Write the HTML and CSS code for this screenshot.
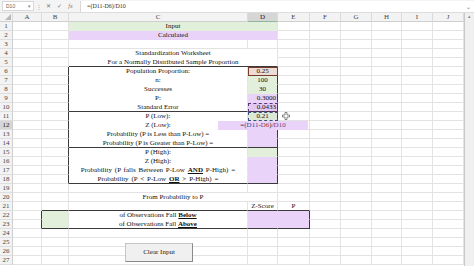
FILE: index.html
```html
<!DOCTYPE html>
<html>
<head>
<meta charset="utf-8">
<link rel="stylesheet" href="styles.css">
</head>
<body>
<div class="app">
  <div class="fbar">
    <div class="namebox"><span>D10</span><span class="dd">▾</span></div>
    <div class="dots">⋮</div>
    <div class="fbtn">✕</div>
    <div class="fbtn">✓</div>
    <div class="fbtn fx">fx</div>
    <div class="finput"><span>=(D11-D6)/D10</span><span class="fexp">⌄</span></div>
  </div>
  <div class="main">
    <div class="sheet">
      <div class="hd corner"><svg width="6" height="6" viewBox="0 0 6 6"><polygon points="6,0 6,6 0,6" fill="#b8b8b8"/></svg></div>
      <div class="hd">A</div><div class="hd">B</div><div class="hd">C</div><div class="hd sel">D</div><div class="hd">E</div><div class="hd">F</div><div class="hd">G</div><div class="hd">H</div><div class="hd">I</div><div class="hd">J</div>

      <div class="rh">1</div><div class="c"></div><div class="c"></div><div class="c s2 g ctr">Input</div><div class="c"></div><div class="c"></div><div class="c"></div><div class="c"></div><div class="c"></div><div class="c"></div>
      <div class="rh">2</div><div class="c"></div><div class="c"></div><div class="c s2 p ctr">Calculated</div><div class="c"></div><div class="c"></div><div class="c"></div><div class="c"></div><div class="c"></div><div class="c"></div>
      <div class="rh">3</div><div class="c"></div><div class="c"></div><div class="c"></div><div class="c"></div><div class="c"></div><div class="c"></div><div class="c"></div><div class="c"></div><div class="c"></div><div class="c"></div>
      <div class="rh">4</div><div class="c"></div><div class="c"></div><div class="c s2 ctr nb">Standardization Worksheet</div><div class="c"></div><div class="c"></div><div class="c"></div><div class="c"></div><div class="c"></div><div class="c"></div>
      <div class="rh">5</div><div class="c"></div><div class="c"></div><div class="c s2 ctr db">For a Normally Distributed Sample Proportion</div><div class="c"></div><div class="c"></div><div class="c"></div><div class="c"></div><div class="c"></div><div class="c"></div>

      <div class="rh">6</div><div class="c"></div><div class="c dr"></div><div class="c ctr nb">Population Proportion:</div><div class="c ctr tan dr ref-red">0.25</div><div class="c"></div><div class="c"></div><div class="c"></div><div class="c"></div><div class="c"></div><div class="c"></div>
      <div class="rh">7</div><div class="c"></div><div class="c dr"></div><div class="c ctr nb">n:</div><div class="c ctr g dr">100</div><div class="c"></div><div class="c"></div><div class="c"></div><div class="c"></div><div class="c"></div><div class="c"></div>
      <div class="rh">8</div><div class="c"></div><div class="c dr"></div><div class="c ctr nb">Successes</div><div class="c ctr g dr">30</div><div class="c"></div><div class="c"></div><div class="c"></div><div class="c"></div><div class="c"></div><div class="c"></div>
      <div class="rh">9</div><div class="c"></div><div class="c dr"></div><div class="c ctr nb">P:</div><div class="c rt p dr">0.3000</div><div class="c"></div><div class="c"></div><div class="c"></div><div class="c"></div><div class="c"></div><div class="c"></div>
      <div class="rh">10</div><div class="c"></div><div class="c dr"></div><div class="c ctr db">Standard Error</div><div class="c rt pp dr db ref-purple">0.0433</div><div class="c"></div><div class="c"></div><div class="c"></div><div class="c"></div><div class="c"></div><div class="c"></div>

      <div class="rh">11</div><div class="c"></div><div class="c dr"></div><div class="c ctr nb">P (Low):</div><div class="c ctr gb dr ref-blue">0.21</div><div class="c"></div><div class="c"></div><div class="c"></div><div class="c"></div><div class="c"></div><div class="c"></div>
      <div class="rh sel">12</div><div class="c"></div><div class="c dr"></div><div class="c ctr nb">Z (Low):</div><div class="c p dr"></div><div class="c"></div><div class="c"></div><div class="c"></div><div class="c"></div><div class="c"></div><div class="c"></div>
      <div class="rh">13</div><div class="c"></div><div class="c dr"></div><div class="c ctr nb">Probability (P is Less than P-Low) =</div><div class="c p dr"></div><div class="c"></div><div class="c"></div><div class="c"></div><div class="c"></div><div class="c"></div><div class="c"></div>
      <div class="rh">14</div><div class="c"></div><div class="c dr"></div><div class="c ctr db">Probability (P is Greater than P-Low) =</div><div class="c p dr db"></div><div class="c"></div><div class="c"></div><div class="c"></div><div class="c"></div><div class="c"></div><div class="c"></div>

      <div class="rh">15</div><div class="c"></div><div class="c dr"></div><div class="c ctr nb">P (High):</div><div class="c g dr"></div><div class="c"></div><div class="c"></div><div class="c"></div><div class="c"></div><div class="c"></div><div class="c"></div>
      <div class="rh">16</div><div class="c"></div><div class="c dr"></div><div class="c ctr nb">Z (High):</div><div class="c p dr"></div><div class="c"></div><div class="c"></div><div class="c"></div><div class="c"></div><div class="c"></div><div class="c"></div>
      <div class="rh">17</div><div class="c"></div><div class="c dr"></div><div class="c ctr nb wide">Probability (P falls Between P-Low <b><u>AND</u></b> P-High) =</div><div class="c p dr"></div><div class="c"></div><div class="c"></div><div class="c"></div><div class="c"></div><div class="c"></div><div class="c"></div>
      <div class="rh">18</div><div class="c"></div><div class="c dr"></div><div class="c ctr db wide">Probability (P &lt; P-Low <b><u>OR</u></b> &gt; P-High) =</div><div class="c p dr db"></div><div class="c"></div><div class="c"></div><div class="c"></div><div class="c"></div><div class="c"></div><div class="c"></div>

      <div class="rh">19</div><div class="c"></div><div class="c"></div><div class="c"></div><div class="c"></div><div class="c"></div><div class="c"></div><div class="c"></div><div class="c"></div><div class="c"></div><div class="c"></div>
      <div class="rh">20</div><div class="c"></div><div class="c"></div><div class="c s2 ctr">From Probability to P</div><div class="c"></div><div class="c"></div><div class="c"></div><div class="c"></div><div class="c"></div><div class="c"></div>
      <div class="rh">21</div><div class="c"></div><div class="c db"></div><div class="c db"></div><div class="c ctr db">Z-Score</div><div class="c ctr db">P</div><div class="c"></div><div class="c"></div><div class="c"></div><div class="c"></div><div class="c"></div>
      <div class="rh">22</div><div class="c dr"></div><div class="c g"></div><div class="c ctr nb">of Observations Fall <b><u>Below</u></b></div><div class="c p pn"></div><div class="c p dr"></div><div class="c"></div><div class="c"></div><div class="c"></div><div class="c"></div><div class="c"></div>
      <div class="rh">23</div><div class="c dr"></div><div class="c g db"></div><div class="c ctr db">of Observations Fall <b><u>Above</u></b></div><div class="c p pn db"></div><div class="c p dr db"></div><div class="c"></div><div class="c"></div><div class="c"></div><div class="c"></div><div class="c"></div>
      <div class="rh">24</div><div class="c"></div><div class="c"></div><div class="c"></div><div class="c"></div><div class="c"></div><div class="c"></div><div class="c"></div><div class="c"></div><div class="c"></div><div class="c"></div>
      <div class="rh">25</div><div class="c"></div><div class="c"></div><div class="c"></div><div class="c"></div><div class="c"></div><div class="c"></div><div class="c"></div><div class="c"></div><div class="c"></div><div class="c"></div>
      <div class="rh">26</div><div class="c"></div><div class="c"></div><div class="c"></div><div class="c"></div><div class="c"></div><div class="c"></div><div class="c"></div><div class="c"></div><div class="c"></div><div class="c"></div>
      <div class="rh">27</div><div class="c"></div><div class="c"></div><div class="c"></div><div class="c"></div><div class="c"></div><div class="c"></div><div class="c"></div><div class="c"></div><div class="c"></div><div class="c"></div>
    </div>
    <div class="vscroll"><span class="up">▴</span></div>

    <div class="editor">=<span class="r-blue">(D11</span>-<span class="r-red">D6</span>)/<span class="r-purple">D10</span></div>
    <svg class="cursor" width="8" height="8" viewBox="0 0 8 8"><path d="M3 0.5h2v2.5h2.5v2h-2.5v2.5h-2v-2.5h-2.5v-2h2.5z" fill="#fff" stroke="#555" stroke-width="0.7"/></svg>
    <div class="btn">Clear Input</div>
  </div>
</div>
</body>
</html>
```

FILE: styles.css
```css
* { box-sizing: border-box; }
html, body { margin: 0; padding: 0; }
body {
  width: 474px;
  height: 266px;
  overflow: hidden;
  background: #fff;
  font-family: "Liberation Serif", "Times New Roman", serif;
  color: #222;
}
.app { display: flex; flex-direction: column; width: 474px; height: 266px; }

.fbar {
  height: 13px;
  display: flex;
  align-items: center;
  background: #f4f4f4;
  border-bottom: 1px solid #dcdcdc;
  font-family: "Liberation Sans", Arial, sans-serif;
  font-size: 5px;
  color: #666;
}
.namebox {
  width: 32px;
  height: 10px;
  margin-left: 2px;
  background: #fff;
  border: 1px solid #d8d8d8;
  display: flex;
  align-items: center;
  justify-content: space-between;
  padding: 0 2px 0 3px;
}
.dd { font-size: 5px; color: #888; }
.dots { width: 9px; text-align: center; color: #aaa; font-size: 6px; }
.fbtn { width: 11px; text-align: center; color: #777; font-size: 5.5px; }
.fx { font-style: italic; font-family: "Liberation Serif", serif; font-size: 6px; }
.finput {
  flex: 1;
  height: 11px;
  margin-left: 4px;
  background: #fff;
  border-left: 1px solid #d8d8d8;
  display: flex;
  align-items: center;
  justify-content: space-between;
  padding: 0 3px 0 6px;
  color: #333;
  font-family: "Liberation Serif", serif;
  font-size: 6px;
}
.fexp { color: #777; font-size: 6px; }

.main { position: relative; display: flex; flex: 1; }
.sheet {
  display: grid;
  grid-template-columns: 13px 29px 27px 179px 30px 32px 31px 31px 30px 31px 31px;
  grid-template-rows: 9px repeat(27, 9px);
  width: 464px;
}
.hd {
  background: #f3f3f3;
  border-right: 1px solid #dadada;
  border-bottom: 1px solid #cfcfcf;
  font-size: 7px;
  line-height: 8px;
  text-align: center;
  color: #444;
}
.hd.sel { background: #d6d6d6; border-bottom: 1px solid #8fb89a; color: #222; }
.corner { display: flex; align-items: flex-end; justify-content: flex-end; padding: 0 1px 1px 0; }
.rh {
  background: #f3f3f3;
  border-right: 1px solid #cfcfcf;
  border-bottom: 1px solid #dedede;
  font-size: 7px;
  line-height: 8px;
  text-align: center;
  color: #444;
}
.rh.sel { background: #d6d6d6; color: #222; }

.c {
  border-right: 1px solid #e3e3e3;
  border-bottom: 1px solid #e3e3e3;
  font-size: 7px;
  line-height: 8px;
  white-space: nowrap;
  padding: 0 1px;
  color: #111;
}
.s2 { grid-column: span 2; }
.ctr { text-align: center; }
.rt { text-align: right; }
.wide { word-spacing: 1.1px; }
.nb { border-bottom-color: #fff; }
.g { background: #e2efda; border-bottom-color: #e2efda; }
.gb { background: #dde8d6; }
.p { background: #ead3f8; border-bottom-color: #ead3f8; }
.pp { background: #e3c9f2; }
.pn { border-right-color: #ead3f8; }
.tan { background: #ecdcd4; }
.dr { border-right-color: #3a3a3a; }
.db { border-bottom-color: #3a3a3a; }
.ref-red { outline: 1px solid #7a3b2e; outline-offset: -1px; }
.ref-purple { outline: 1px dashed #5b3478; outline-offset: -1px; }
.ref-blue { outline: 1px dashed #3a4f7a; outline-offset: -1px; }

.vscroll {
  width: 10px;
  background: #f0f0f0;
  border-left: 1px solid #c8c8c8;
  display: flex;
  justify-content: center;
}
.up { font-size: 5px; color: #888; line-height: 8px; }

.editor {
  position: absolute;
  left: 218px;
  top: 108px;
  width: 90px;
  height: 9px;
  background: #ead3f8;
  font-size: 7px;
  line-height: 9px;
  text-align: center;
  color: #222;
}
.r-blue { color: #3b3a9a; }
.r-red { color: #a0392c; }
.r-purple { color: #6a3a8e; }
.cursor { position: absolute; left: 282px; top: 99px; }

.btn {
  position: absolute;
  left: 125px;
  top: 230px;
  width: 68px;
  height: 19px;
  background: #f0f0f0;
  border: 1px solid #c4c4c4;
  border-right-color: #8a8a8a;
  border-bottom-color: #8a8a8a;
  font-size: 7px;
  line-height: 17px;
  text-align: center;
  color: #222;
}
```
